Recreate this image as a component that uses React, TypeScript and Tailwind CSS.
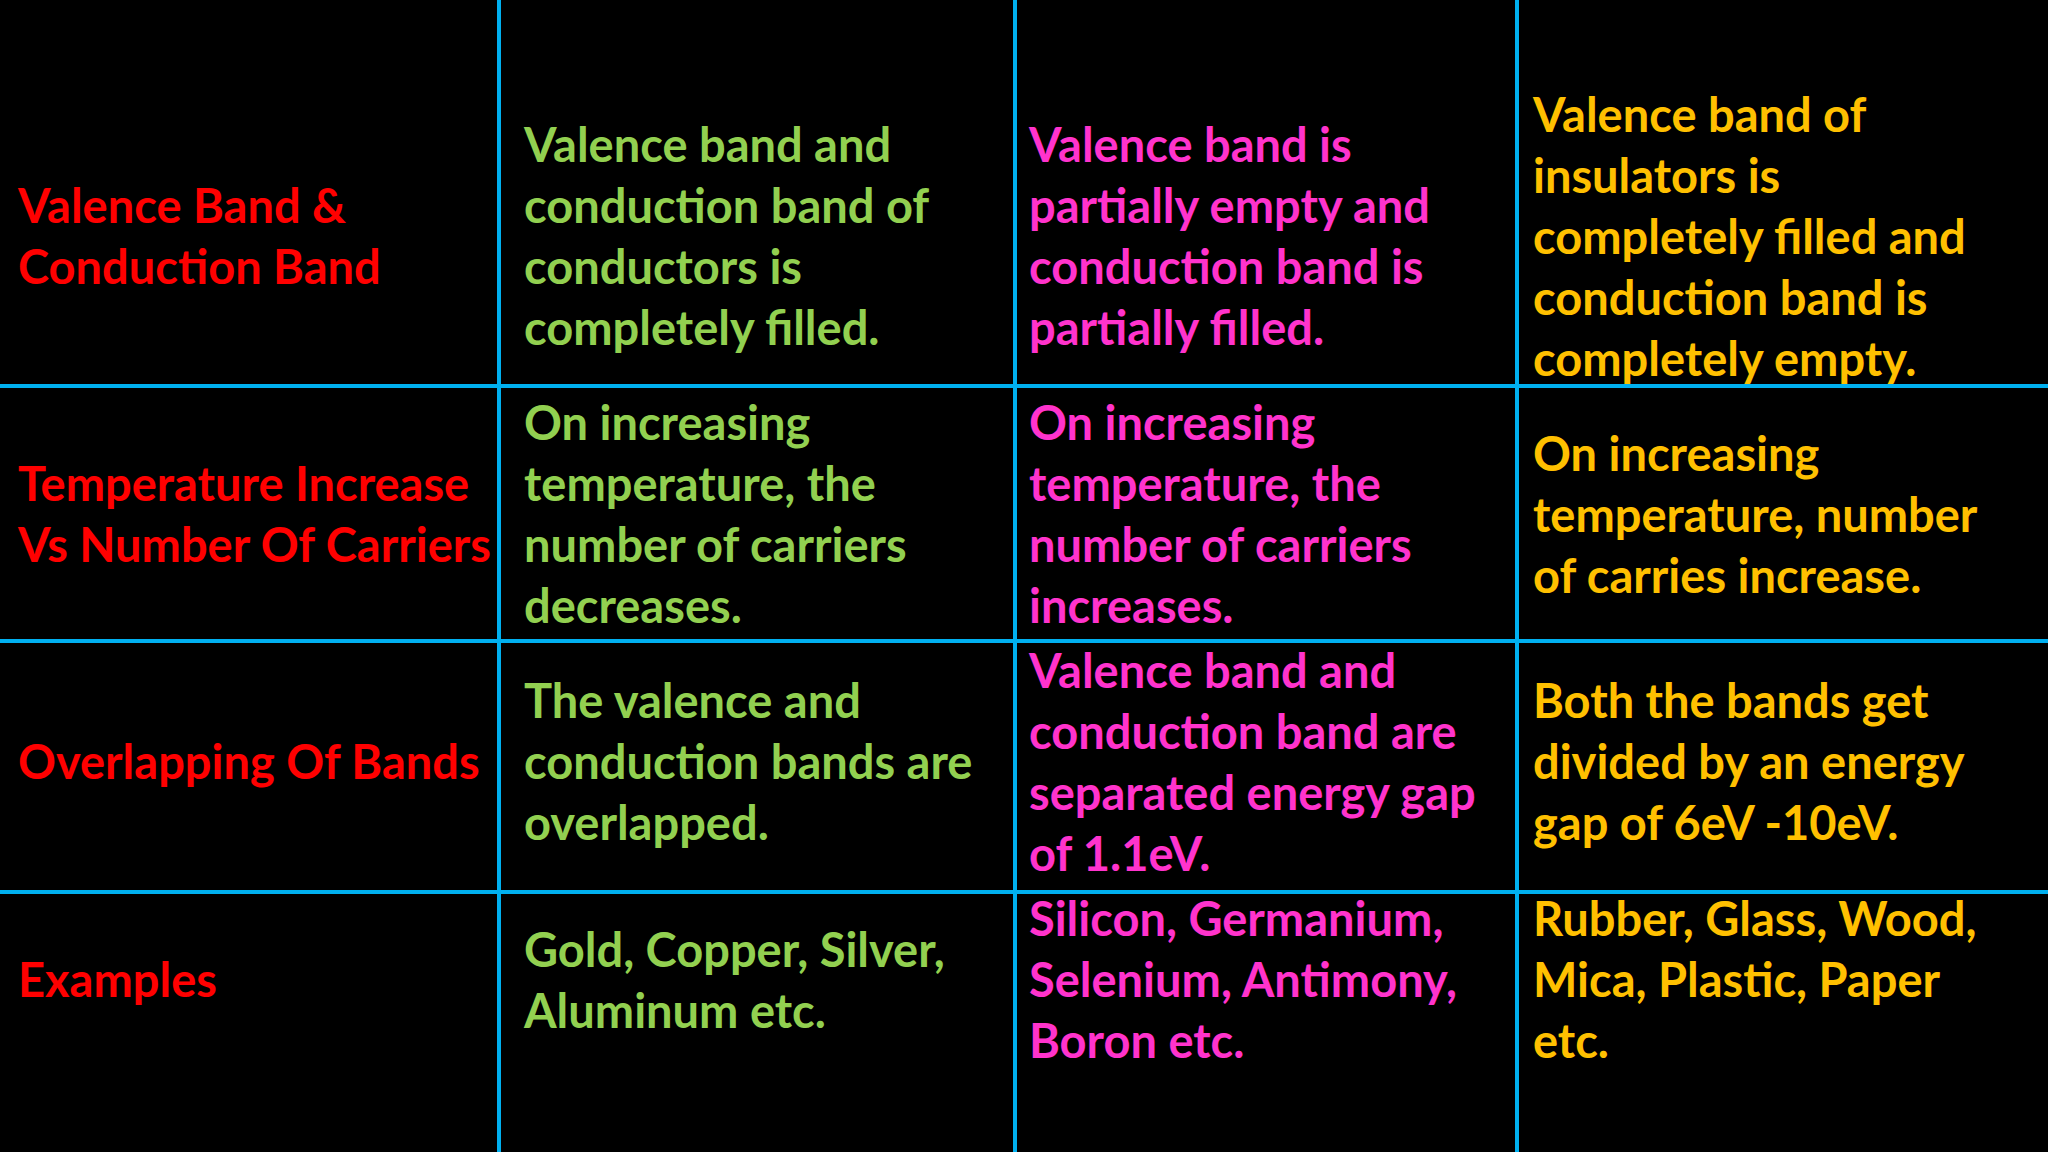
const rows = [
  {
    label: ["Valence Band &", "Conduction Band"],
    cells: [
      ["Valence band and", "conduction band of", "conductors is", "completely filled."],
      ["Valence band is", "partially empty and", "conduction band is", "partially filled."],
      ["Valence band of", "insulators is", "completely filled and", "conduction band is", "completely empty."],
    ],
    pad: "pt-[88px]",
  },
  {
    label: ["Temperature Increase", "Vs Number Of Carriers"],
    cells: [
      ["On increasing", "temperature, the", "number of carriers", "decreases."],
      ["On increasing", "temperature, the", "number of carriers", "increases."],
      ["On increasing", "temperature, number", "of carries increase."],
    ],
    pad: "pt-[1px]",
  },
  {
    label: ["Overlapping Of Bands"],
    cells: [
      ["The valence and", "conduction bands are", "overlapped."],
      ["Valence band and", "conduction band are", "separated energy gap", "of 1.1eV."],
      ["Both the bands get", "divided by an energy", "gap of 6eV -10eV."],
    ],
    pad: "pb-[10px]",
  },
  {
    label: ["Examples"],
    cells: [
      ["Gold, Copper, Silver,", "Aluminum etc."],
      ["Silicon, Germanium,", "Selenium, Antimony,", "Boron etc."],
      ["Rubber, Glass, Wood,", "Mica, Plastic, Paper", "etc."],
    ],
    pad: "pb-[87px]",
  },
];

const colors = ["text-[#92d050]", "text-[#ff33cc]", "text-[#ffc000]"];
const colPad = ["pl-[23px]", "pl-[12px]", "pl-[14px]"];

function Lines({ lines }: { lines: string[] }) {
  return (
    <div className="whitespace-nowrap">
      {lines.map((l) => (
        <div key={l}>{l}</div>
      ))}
    </div>
  );
}

export default function App() {
  return (
    <div
      className="grid h-[1152px] w-[2048px] grid-cols-[497px_512px_498px_minmax(0,1fr)] grid-rows-[384px_251px_247px_minmax(0,1fr)] gap-[4px] overflow-hidden bg-[#00b0f0] text-[47px] font-bold leading-[61px]"
      style={{ fontFamily: "Lato, 'Noto Sans', sans-serif" }}
    >
      {rows.map((row) => (
        <div key={row.label.join()} className="contents">
          <div className={`flex min-h-0 items-center bg-black pl-[18px] text-[#ff0000] ${row.pad}`}>
            <Lines lines={row.label} />
          </div>
          {row.cells.map((cell, i) => (
            <div
              key={i}
              className={`flex min-h-0 items-center bg-black ${colPad[i]} ${colors[i]} ${row.pad}`}
            >
              <Lines lines={cell} />
            </div>
          ))}
        </div>
      ))}
    </div>
  );
}
